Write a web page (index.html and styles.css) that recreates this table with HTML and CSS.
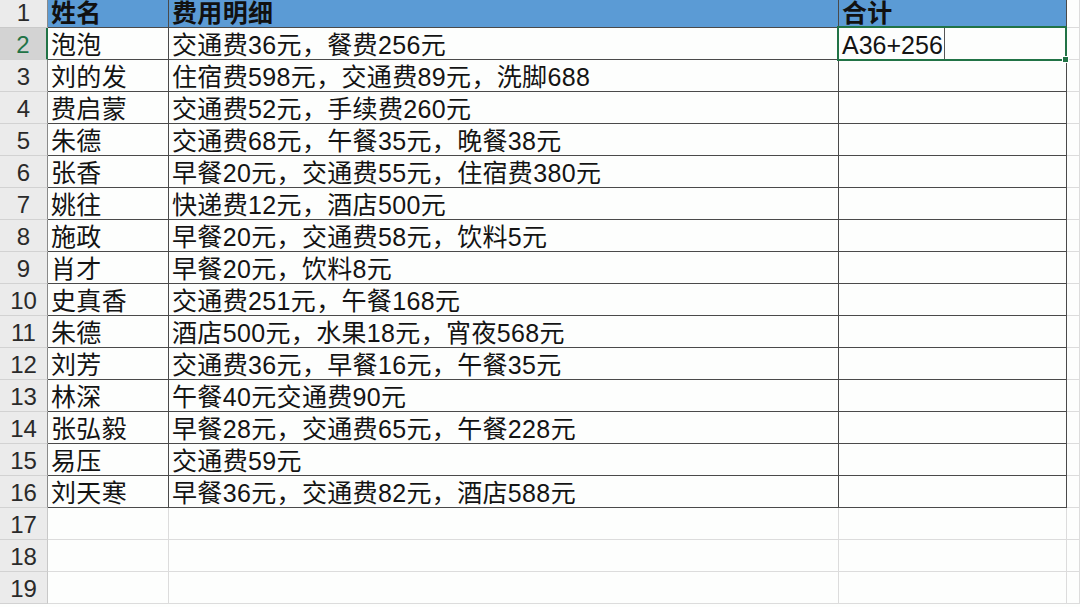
FILE: index.html
```html
<!DOCTYPE html>
<html lang="zh">
<head>
<meta charset="utf-8">
<link rel="stylesheet" href="styles.css">
</head>
<body>
<div class="sheet">
  <div class="row head tb">
    <div class="rh">1</div><div class="c a">姓名</div><div class="c b">费用明细</div><div class="c cc">合计</div><div class="c d"></div>
  </div>
  <div class="row tb sel-row">
    <div class="rh">2</div><div class="c a">泡泡</div><div class="c b">交通费36元，餐费256元</div><div class="c cc active">A36+256<span class="caret"></span><span class="sel"><span class="handle"></span></span></div><div class="c d"></div>
  </div>
  <div class="row tb"><div class="rh">3</div><div class="c a">刘的发</div><div class="c b">住宿费598元，交通费89元，洗脚688</div><div class="c cc"></div><div class="c d"></div></div>
  <div class="row tb"><div class="rh">4</div><div class="c a">费启蒙</div><div class="c b">交通费52元，手续费260元</div><div class="c cc"></div><div class="c d"></div></div>
  <div class="row tb"><div class="rh">5</div><div class="c a">朱德</div><div class="c b">交通费68元，午餐35元，晚餐38元</div><div class="c cc"></div><div class="c d"></div></div>
  <div class="row tb"><div class="rh">6</div><div class="c a">张香</div><div class="c b">早餐20元，交通费55元，住宿费380元</div><div class="c cc"></div><div class="c d"></div></div>
  <div class="row tb"><div class="rh">7</div><div class="c a">姚往</div><div class="c b">快递费12元，酒店500元</div><div class="c cc"></div><div class="c d"></div></div>
  <div class="row tb"><div class="rh">8</div><div class="c a">施政</div><div class="c b">早餐20元，交通费58元，饮料5元</div><div class="c cc"></div><div class="c d"></div></div>
  <div class="row tb"><div class="rh">9</div><div class="c a">肖才</div><div class="c b">早餐20元，饮料8元</div><div class="c cc"></div><div class="c d"></div></div>
  <div class="row tb"><div class="rh">10</div><div class="c a">史真香</div><div class="c b">交通费251元，午餐168元</div><div class="c cc"></div><div class="c d"></div></div>
  <div class="row tb"><div class="rh">11</div><div class="c a">朱德</div><div class="c b">酒店500元，水果18元，宵夜568元</div><div class="c cc"></div><div class="c d"></div></div>
  <div class="row tb"><div class="rh">12</div><div class="c a">刘芳</div><div class="c b">交通费36元，早餐16元，午餐35元</div><div class="c cc"></div><div class="c d"></div></div>
  <div class="row tb"><div class="rh">13</div><div class="c a">林深</div><div class="c b">午餐40元交通费90元</div><div class="c cc"></div><div class="c d"></div></div>
  <div class="row tb"><div class="rh">14</div><div class="c a">张弘毅</div><div class="c b">早餐28元，交通费65元，午餐228元</div><div class="c cc"></div><div class="c d"></div></div>
  <div class="row tb"><div class="rh">15</div><div class="c a">易压</div><div class="c b">交通费59元</div><div class="c cc"></div><div class="c d"></div></div>
  <div class="row tb"><div class="rh">16</div><div class="c a">刘天寒</div><div class="c b">早餐36元，交通费82元，酒店588元</div><div class="c cc"></div><div class="c d"></div></div>
  <div class="row"><div class="rh">17</div><div class="c a"></div><div class="c b"></div><div class="c cc"></div><div class="c d"></div></div>
  <div class="row"><div class="rh">18</div><div class="c a"></div><div class="c b"></div><div class="c cc"></div><div class="c d"></div></div>
  <div class="row"><div class="rh">19</div><div class="c a"></div><div class="c b"></div><div class="c cc"></div><div class="c d"></div></div>
</div>
</body>
</html>
```

FILE: styles.css
```css
html, body {
  margin: 0;
  padding: 0;
  background: #fdfefd;
  overflow: hidden;
  width: 1080px;
  height: 607px;
}
.sheet {
  margin-top: -4px;
  font-family: "Liberation Sans", "Noto Sans CJK SC", sans-serif;
  font-size: 25px;
  color: #141414;
}
.row {
  display: grid;
  grid-template-columns: 48px 121px 670px 228px 1fr;
  height: 32px;
}
.rh, .c {
  box-sizing: border-box;
  height: 32px;
  line-height: 32px;
  border-right: 1px solid #dcdcdc;
  border-bottom: 1px solid #dcdcdc;
  white-space: nowrap;
  overflow: visible;
}
.rh {
  background: #ebebeb;
  color: #2a2a2a;
  text-align: center;
  font-size: 24px;
  border-right-color: #c8c8c8;
  border-bottom-color: #d2d2d2;
  padding-top: 1px;
}
.c {
  padding-left: 3px;
  padding-top: 1px;
  letter-spacing: 0.35px;
}
.tb .a, .tb .b, .tb .cc {
  border-right-color: #4a4a4a;
  border-bottom-color: #4a4a4a;
}
.tb .rh {
  border-right-color: #8a8a8a;
}
.head .a, .head .b, .head .cc {
  background: #5b9bd5;
  font-weight: bold;
  color: #111;
}
.head .rh {
  border-bottom-color: #c9c9c9;
}
.sel-row .rh {
  background: #d3d3d3;
  color: #217346;
  border-right: 2px solid #217346;
}
.active {
  position: relative;
  overflow: visible;
  letter-spacing: 0;
}
.caret {
  display: inline-block;
  width: 1px;
  height: 31px;
  background: #555;
  vertical-align: top;
  margin-top: -1px;
  margin-left: 1px;
}
.sel {
  position: absolute;
  left: -2px;
  top: -2px;
  right: -1px;
  bottom: -2px;
  border: 2px solid #217346;
  pointer-events: none;
}
.handle {
  position: absolute;
  right: -4px;
  bottom: -4px;
  width: 5px;
  height: 5px;
  background: #217346;
  border: 1px solid #fff;
}
```
